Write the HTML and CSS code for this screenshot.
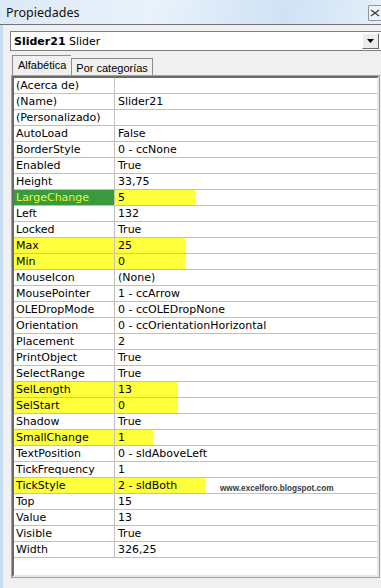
FILE: index.html
```html
<!DOCTYPE html>
<html lang="es">
<head>
    <meta charset="UTF-8">
    <title>Propiedades</title>
    <link rel="stylesheet" href="styles.css">
</head>
<body>
    <div class="window">
        <div class="titlebar">
            <span class="title">Propiedades</span>
            <span class="close">
                <svg width="10" height="8" viewBox="0 0 10 8"><path d="M1 1 L9 7 M9 1 L1 7" stroke="#444" stroke-width="1.4" fill="none"/></svg>
            </span>
        </div>
        <div class="panel">
            <div class="combo">
                <span class="combo-text"><b>Slider21</b> Slider</span>
                <span class="combo-btn">
                    <svg width="7" height="4" viewBox="0 0 7 4"><path d="M0 0 H7 L3.5 4 Z" fill="#000"/></svg>
                </span>
            </div>
            <div class="tabs">
                <span class="tab active">Alfabética</span>
                <span class="tab">Por categorías</span>
            </div>
            <div class="grid">
                <table class="props" id="props"></table>
                <span class="watermark">www.excelforo.blogspot.com</span>
            </div>
        </div>
    </div>

    <script>
        // [nombre, valor, resaltado, ancho del resaltado]
        const props = [
            ['(Acerca de)', ''],
            ['(Name)', 'Slider21'],
            ['(Personalizado)', ''],
            ['AutoLoad', 'False'],
            ['BorderStyle', '0 - ccNone'],
            ['Enabled', 'True'],
            ['Height', '33,75'],
            ['LargeChange', '5', 'sel', 80],
            ['Left', '132'],
            ['Locked', 'True'],
            ['Max', '25', 'mark', 170],
            ['Min', '0', 'mark', 170],
            ['MouseIcon', '(None)'],
            ['MousePointer', '1 - ccArrow'],
            ['OLEDropMode', '0 - ccOLEDropNone'],
            ['Orientation', '0 - ccOrientationHorizontal'],
            ['Placement', '2'],
            ['PrintObject', 'True'],
            ['SelectRange', 'True'],
            ['SelLength', '13', 'mark', 163],
            ['SelStart', '0', 'mark', 163],
            ['Shadow', 'True'],
            ['SmallChange', '1', 'mark', 138],
            ['TextPosition', '0 - sldAboveLeft'],
            ['TickFrequency', '1'],
            ['TickStyle', '2 - sldBoth', 'mark', 190],
            ['Top', '15'],
            ['Value', '13'],
            ['Visible', 'True'],
            ['Width', '326,25']
        ];

        const table = document.getElementById('props');
        props.forEach(([name, value, kind, width]) => {
            const tr = document.createElement('tr');
            const nameCell = document.createElement('td');
            const valueCell = document.createElement('td');
            nameCell.className = 'name';
            valueCell.className = 'value';
            nameCell.textContent = name;
            valueCell.textContent = value;
            if (kind === 'mark') {
                nameCell.classList.add('mark');
                valueCell.style.backgroundSize = (width - 100) + 'px 100%';
                valueCell.classList.add('mark-part');
            }
            if (kind === 'sel') {
                nameCell.classList.add('sel');
                valueCell.style.backgroundSize = width + 'px 100%';
                valueCell.classList.add('mark-part');
            }
            tr.appendChild(nameCell);
            tr.appendChild(valueCell);
            table.appendChild(tr);
        });
    </script>
</body>
</html>
```

FILE: styles.css
```css
body {
    margin: 0;
    padding: 0;
    background-color: #f0f0f0;
    font-family: Tahoma, "DejaVu Sans", sans-serif;
    font-size: 11px;
    color: #000;
    overflow: hidden;
}

.window {
    width: 381px;
    height: 588px;
    border-left: 3px solid #c9dcef;
    box-sizing: border-box;
    background-color: #f0f0f0;
}

.titlebar {
    height: 24px;
    display: flex;
    align-items: center;
    justify-content: space-between;
    padding: 0 0 0 3px;
    margin-left: -3px;
    background: linear-gradient(100deg, #dce9f6 0%, #e9f2fb 40%, #cfe2f5 75%, #e4eff9 100%);
    border-bottom: 1px solid #6e7378;
}

.title {
    font-family: "Noto Sans", "DejaVu Sans", sans-serif;
    font-size: 12.5px;
    color: #111;
    padding-left: 3px;
    padding-top: 1px;
}

.close {
    width: 12px;
    height: 14px;
    border: 1px solid #8a96a4;
    border-right: none;
    border-radius: 2px 0 0 2px;
    background: #eef3f8;
    display: flex;
    align-items: center;
    justify-content: center;
    margin-top: 2px;
}

.panel {
    padding: 6px 0 0 7px;
}

.combo {
    height: 18px;
    border: 1px solid #7f7f7f;
    border-right: none;
    background: #fff;
    display: flex;
    align-items: center;
    justify-content: space-between;
}

.combo-text {
    padding-left: 3px;
}

.combo-btn {
    width: 15px;
    height: 14px;
    margin-right: 2px;
    background: #ececec;
    border: 1px solid;
    border-color: #fff #6b6b6b #6b6b6b #fff;
    display: flex;
    align-items: center;
    justify-content: center;
}

.tabs {
    display: flex;
    align-items: flex-end;
    height: 22px;
    padding-left: 2px;
    margin-top: 3px;
    font-family: "Liberation Sans", Arial, sans-serif;
    font-size: 11px;
}

.tab {
    height: 17px;
    line-height: 18px;
    padding: 0 4px;
    border: 1px solid #8c8c8c;
    border-bottom: none;
    background: #f0f0f0;
}

.tab.active {
    height: 20px;
    line-height: 18px;
    padding: 0 5px;
    border-right: none;
}

.grid {
    position: relative;
    height: 501px;
    margin: 0 2px 0 2px;
    border: 2px solid;
    border-color: #6a6a6a #e6e6e6 #e6e6e6 #6a6a6a;
    outline: 1px solid #a0a0a0;
    background: #fff;
    box-sizing: border-box;
}

.props {
    width: 100%;
    border-collapse: collapse;
    table-layout: fixed;
}

.props td {
    height: 15px;
    padding: 0 0 0 2px;
    border-bottom: 1px solid #c0c0c0;
    white-space: nowrap;
    overflow: hidden;
    line-height: 15px;
}

.props td.name {
    width: 98px;
    border-right: 1px solid #c0c0c0;
}

.props td.mark {
    background-color: #ffff3c;
}

.props td.sel {
    background-color: #389a3c;
    color: #e6f73a;
}

.props td.mark-part {
    background-image: linear-gradient(#ffff3c, #ffff3c);
    background-repeat: no-repeat;
}

.props td.value {
    padding-left: 3px;
}

.watermark {
    position: absolute;
    left: 206px;
    top: 406px;
    font-family: "Liberation Sans", Arial, sans-serif;
    font-size: 8.2px;
    font-weight: bold;
    color: #3a3a3a;
}
```
